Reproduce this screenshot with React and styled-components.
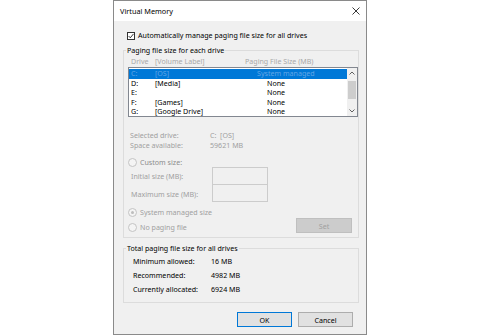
import React from "react";
import styled, { createGlobalStyle } from "styled-components";

const Global = createGlobalStyle`
  html, body {
    margin: 0;
    padding: 0;
    background: #ffffff;
  }
  body {
    font-family: "Noto Sans", "Open Sans", sans-serif;
    font-size: 7.1px;
    color: #000;
  }
`;

const Page = styled.div`
  width: 480px;
  height: 335px;
  display: flex;
  justify-content: center;
`;

const Dialog = styled.div`
  width: 252px;
  height: 333px;
  border: 1px solid #8a8a8a;
  background: #f0f0f0;
  display: flex;
  flex-direction: column;
`;

const TitleBar = styled.div`
  height: 20px;
  background: #fff;
  display: flex;
  align-items: center;
  justify-content: space-between;
  padding: 0 6px 0 6px;
  font-size: 7.3px;
`;

const Body = styled.div`
  flex: 1;
  display: flex;
  flex-direction: column;
  padding: 10px 7px 0 9px;
`;

const CheckRow = styled.label`
  display: flex;
  align-items: center;
  gap: 3px;
  height: 9px;
  margin-left: 4px;
  line-height: 9px;
`;

const CheckBox = styled.span`
  width: 6px;
  height: 6px;
  border: 1px solid #333;
  background: #fff;
  display: flex;
  align-items: center;
  justify-content: center;
`;

const Group = styled.fieldset`
  margin: ${(p) => p.$top}px 0 0 0;
  padding: 0;
  border: 1px solid #dcdcdc;
  min-width: 0;
`;

const Legend = styled.legend`
  margin-left: 2px;
  padding: 0 1px;
  line-height: 10px;
  height: 10px;
`;

const GroupInner = styled.div`
  padding: ${(p) => p.$pad};
  display: flex;
  flex-direction: column;
`;

const Header = styled.div`
  display: flex;
  height: 10px;
  line-height: 10px;
  padding-left: 3px;
  color: #a8a8a8;
`;

const HeadCell = styled.span`
  width: ${(p) => p.$w}px;
  flex: none;
`;

const ListBox = styled.div`
  margin-top: 1px;
  width: 228px;
  height: 48px;
  border: 1px solid #828790;
  background: #fff;
  display: flex;
`;

const Rows = styled.div`
  flex: 1;
  padding-top: 1px;
  overflow: hidden;
`;

const Row = styled.div`
  display: grid;
  grid-template-columns: 24px 102px 1fr;
  height: 9.6px;
  line-height: 9.6px;
  padding-left: 2px;
  background: ${(p) => (p.$sel ? "#0078d7" : "transparent")};
  color: ${(p) => (p.$sel ? "#62a6e6" : "#000")};
`;

const SizeCell = styled.span`
  padding-left: ${(p) => p.$indent}px;
`;

const Scroll = styled.div`
  width: 10px;
  background: #f0f0f0;
  display: flex;
  flex-direction: column;
  align-items: center;
`;

const Arrow = styled.div`
  height: 10px;
  display: flex;
  align-items: center;
  justify-content: center;
`;

const Thumb = styled.div`
  width: 8px;
  height: 18px;
  margin-top: 3px;
  background: #cdcdcd;
`;

const InfoGrid = styled.div`
  display: grid;
  grid-template-columns: ${(p) => p.$col}px 1fr;
  row-gap: ${(p) => p.$gap}px;
  margin-top: ${(p) => p.$top}px;
  padding-left: ${(p) => p.$left}px;
  line-height: 10px;
  color: ${(p) => (p.$muted ? "#a0a0a0" : "#000")};
`;

const RadioRow = styled.div`
  display: flex;
  align-items: center;
  gap: 3px;
  height: 10px;
  line-height: 10px;
  margin-top: ${(p) => p.$top}px;
  color: ${(p) => p.$color || "#a0a0a0"};
`;

const Radio = styled.span`
  width: 7px;
  height: 7px;
  border-radius: 50%;
  border: 1px solid #c4c4c4;
  background: #f4f4f4;
  display: flex;
  align-items: center;
  justify-content: center;
  &::after {
    content: "";
    width: 3px;
    height: 3px;
    border-radius: 50%;
    background: ${(p) => (p.$on ? "#bdbdbd" : "transparent")};
  }
`;

const SizeFields = styled.div`
  display: grid;
  grid-template-columns: 81px 56px;
  margin-left: 3px;
  align-items: center;
  color: #a0a0a0;
`;

const Field = styled.div`
  height: 16px;
  border: 1px solid #cccccc;
  background: #f0f0f0;
  margin-top: ${(p) => p.$mt || 0}px;
`;

const BottomRow = styled.div`
  display: flex;
  justify-content: space-between;
  align-items: flex-end;
  padding-right: 6px;
`;

const RadioStack = styled.div`
  display: flex;
  flex-direction: column;
`;

const Button = styled.div`
  width: ${(p) => p.$w}px;
  height: ${(p) => p.$h}px;
  box-sizing: border-box;
  display: flex;
  align-items: center;
  justify-content: center;
  margin-bottom: ${(p) => p.$mb || 0}px;
  background: ${(p) => p.$bg || "#e1e1e1"};
  border: ${(p) => p.$border || "1px solid #adadad"};
  color: ${(p) => p.$color || "#000"};
`;

const Footer = styled.div`
  display: flex;
  justify-content: flex-end;
  gap: 6px;
  margin-top: 9px;
  padding-right: 6px;
`;

const Chevron = ({ up }) => (
  <svg width="6" height="4" viewBox="0 0 6 4">
    <path
      d={up ? "M0.5 3.5 L3 1 L5.5 3.5" : "M0.5 0.5 L3 3 L5.5 0.5"}
      fill="none"
      stroke="#606060"
      strokeWidth="1"
    />
  </svg>
);

const drives = [
  { d: "C:", label: "[OS]", size: "System managed", sel: true },
  { d: "D:", label: "[Media]", size: "None" },
  { d: "E:", label: "", size: "None" },
  { d: "F:", label: "[Games]", size: "None" },
  { d: "G:", label: "[Google Drive]", size: "None" },
];

export default function App() {
  return (
    <Page>
      <Global />
      <Dialog>
        <TitleBar>
          <span>Virtual Memory</span>
          <svg width="8" height="8" viewBox="0 0 8 8">
            <path d="M0.5 0.5 L7.5 7.5 M7.5 0.5 L0.5 7.5" stroke="#222" strokeWidth="0.9" />
          </svg>
        </TitleBar>
        <Body>
          <CheckRow>
            <CheckBox>
              <svg width="6" height="6" viewBox="0 0 6 6">
                <path d="M0.6 3 L2.3 4.8 L5.5 0.9" fill="none" stroke="#222" strokeWidth="0.9" />
              </svg>
            </CheckBox>
            Automatically manage paging file size for all drives
          </CheckRow>

          <Group $top={5}>
            <Legend>Paging file size for each drive</Legend>
            <GroupInner $pad="1px 0 0 4px">
              <Header>
                <HeadCell $w={24}>Drive</HeadCell>
                <HeadCell $w={90}>[Volume Label]</HeadCell>
                <HeadCell $w={100}>Paging File Size (MB)</HeadCell>
              </Header>
              <ListBox>
                <Rows>
                  {drives.map((r) => (
                    <Row key={r.d} $sel={r.sel}>
                      <span>{r.d}</span>
                      <span>{r.label}</span>
                      <SizeCell $indent={r.sel ? 0 : 10}>{r.size}</SizeCell>
                    </Row>
                  ))}
                </Rows>
                <Scroll>
                  <Arrow>
                    <Chevron up />
                  </Arrow>
                  <Thumb />
                  <div style={{ flex: 1 }} />
                  <Arrow>
                    <Chevron />
                  </Arrow>
                </Scroll>
              </ListBox>

              <InfoGrid $col={80} $gap={0} $top={13} $left={2} $muted>
                <span>Selected drive:</span>
                <span>C:&nbsp;&nbsp;[OS]</span>
                <span>Space available:</span>
                <span>59621 MB</span>
              </InfoGrid>

              <RadioRow $top={7} $color="#8c8c8c">
                <Radio />
                Custom size:
              </RadioRow>
              <SizeFields>
                <span>Initial size (MB):</span>
                <Field />
                <span>Maximum size (MB):</span>
                <Field $mt={-1} />
              </SizeFields>

              <BottomRow>
                <RadioStack>
                  <RadioRow $top={5}>
                    <Radio $on />
                    System managed size
                  </RadioRow>
                  <RadioRow $top={5}>
                    <Radio />
                    No paging file
                  </RadioRow>
                </RadioStack>
                <Button
                  $w={56}
                  $h={15}
                  $mb={-1}
                  $bg="#cccccc"
                  $border="1px solid #bfbfbf"
                  $color="#a0a0a0"
                >
                  Set
                </Button>
              </BottomRow>
              <div style={{ height: 5 }} />
            </GroupInner>
          </Group>

          <Group $top={5}>
            <Legend>Total paging file size for all drives</Legend>
            <GroupInner $pad="0 0 8px 0">
              <InfoGrid $col={78} $gap={4} $top={3} $left={9}>
                <span>Minimum allowed:</span>
                <span>16 MB</span>
                <span>Recommended:</span>
                <span>4982 MB</span>
                <span>Currently allocated:</span>
                <span>6924 MB</span>
              </InfoGrid>
            </GroupInner>
          </Group>

          <Footer>
            <Button $w={55} $h={15} $border="1px solid #0078d7">
              OK
            </Button>
            <Button $w={55} $h={15}>
              Cancel
            </Button>
          </Footer>
        </Body>
      </Dialog>
    </Page>
  );
}
